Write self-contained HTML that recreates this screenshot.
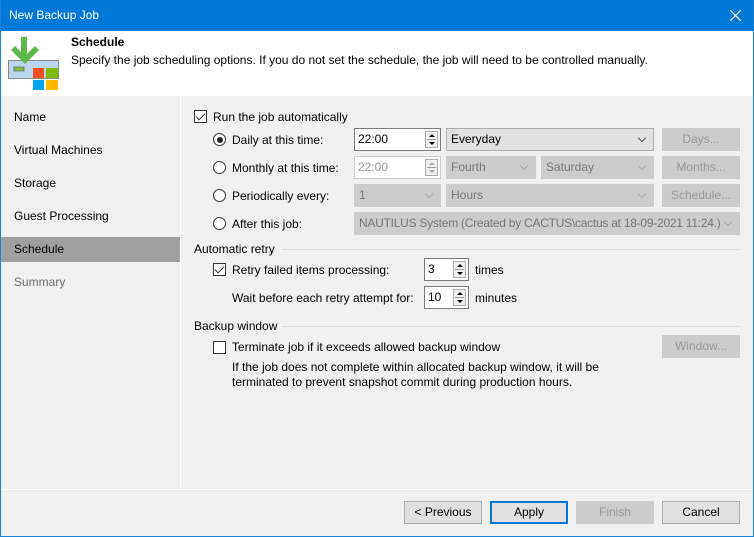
<!DOCTYPE html><html><head><style>
*{margin:0;padding:0;box-sizing:border-box}
body{width:754px;height:537px;overflow:hidden;font-family:"Liberation Sans",sans-serif;font-size:12px;color:#000;background:#f0f0f0;position:relative}
.a{position:absolute;white-space:nowrap}
.win{position:absolute;left:0;top:0;width:754px;height:537px;border:1px solid #1883d7;border-top:none}
.tb{position:absolute;left:0;top:0;width:754px;height:31px;background:#0078d7;color:#fff;font-size:12px}
.hdr{position:absolute;left:1px;top:31px;width:752px;height:65px;background:#fff}
.side{position:absolute;left:1px;top:96px;width:179px;height:392px;background:#f0f0f0}
.vsep{position:absolute;left:180px;top:96px;width:1px;height:392px;background:#fff}
.foot{position:absolute;left:1px;top:489px;width:752px;height:1px;background:#fff}
.cb{position:absolute;width:13px;height:13px;border:1px solid #333;background:#fff}
.cb.k::after{content:"";position:absolute;left:3px;top:0px;width:4px;height:8px;border:solid #333;border-width:0 1.5px 1.5px 0;transform:rotate(45deg)}
.rb{position:absolute;width:13px;height:13px;border:1px solid #333;border-radius:50%;background:#fff}
.rb.k::after{content:"";position:absolute;left:2.5px;top:2.5px;width:6px;height:6px;border-radius:50%;background:#222}
.box{position:absolute;height:23px;border:1px solid #7a7a7a;background:#fff;padding:3px 3px;line-height:15px;white-space:nowrap;overflow:hidden}
.box.d{border-color:#ccc;color:#999;background:#fff}
.sp{position:absolute;right:2px;top:2px;width:13px;height:17px;border:1px solid #adadad;background:#f0f0f0}
.sp::before{content:"";position:absolute;left:3px;top:2px;border:3px solid transparent;border-bottom:3px solid #000;border-top:0}
.sp::after{content:"";position:absolute;left:3px;bottom:2px;border:3px solid transparent;border-top:3px solid #000;border-bottom:0}
.sp i{position:absolute;left:1px;right:1px;top:7px;height:1px;background:#999}
.sp.d::before{border-bottom-color:#aaa}.sp.d::after{border-top-color:#aaa}
.dd{position:absolute;height:23px;border:1px solid #adadad;background:#e1e1e1;padding:3px 4px;line-height:15px;white-space:nowrap;overflow:hidden}
.dd.d{background:#ccc;border-color:#ccc;color:#777}
.dd::after{content:"";position:absolute;right:8px;top:6px;width:5px;height:5px;border:solid #555;border-width:0 1px 1px 0;transform:rotate(45deg)}
.dd.d::after{border-color:#aaa}
.btn{position:absolute;height:23px;border:1px solid #adadad;background:#e1e1e1;text-align:center;line-height:21px}
.btn.d{background:#ccc;border-color:#ccc;color:#999}
.sec{position:absolute;height:1px;background:#dcdcdc}
</style></head><body>
<div class="tb"><span class="a" style="left:9px;top:8px">New Backup Job</span>
<svg class="a" style="left:730px;top:10px" width="11" height="11"><path d="M0 0L11 11M11 0L0 11" stroke="#fff" stroke-width="1.2"/></svg></div>
<div class="win"></div>
<div class="hdr">
<svg class="a" style="left:0;top:0" width="64" height="64">
<rect x="7.5" y="29.5" width="50" height="18" fill="#bcd6ef" stroke="#888" stroke-width="1"/>
<rect x="13" y="36" width="10" height="4" fill="#7fc241" stroke="#555" stroke-width=".6"/>
<path d="M20 6h6v17l8-8 4 4-14 14-14-14 4-4 6 6z" fill="#5db94a"/>
<rect x="32" y="37" width="11" height="10" fill="#f25022"/><rect x="45" y="37" width="12" height="10" fill="#7fba00"/>
<rect x="32" y="49" width="11" height="10" fill="#00a4ef"/><rect x="45" y="49" width="12" height="10" fill="#ffb900"/>
</svg>
<span class="a" style="left:70px;top:4px;font-weight:bold">Schedule</span>
<span class="a" style="left:70px;top:22px">Specify the job scheduling options. If you do not set the schedule, the job will need to be controlled manually.</span>
</div>
<div class="side">
<span class="a" style="left:13px;top:14px">Name</span>
<span class="a" style="left:13px;top:47px">Virtual Machines</span>
<span class="a" style="left:13px;top:80px">Storage</span>
<span class="a" style="left:13px;top:113px">Guest Processing</span>
<div class="a" style="left:0;top:141px;width:179px;height:25px;background:#a0a0a0"></div>
<span class="a" style="left:13px;top:146px">Schedule</span>
<span class="a" style="left:13px;top:179px;color:#6d6d6d">Summary</span>
</div>
<div class="vsep"></div>
<div class="cb k" style="left:194px;top:110px"></div><span class="a" style="left:213px;top:110px">Run the job automatically</span>
<div class="rb k" style="left:213px;top:133px"></div><span class="a" style="left:232px;top:133px">Daily at this time:</span>
<div class="rb" style="left:213px;top:161px"></div><span class="a" style="left:232px;top:161px">Monthly at this time:</span>
<div class="rb" style="left:213px;top:189px"></div><span class="a" style="left:232px;top:189px">Periodically every:</span>
<div class="rb" style="left:213px;top:217px"></div><span class="a" style="left:232px;top:217px">After this job:</span>
<div class="box" style="left:354px;top:128px;width:87px">22:00<div class="sp"><i></i></div></div>
<div class="box d" style="left:354px;top:156px;width:87px">22:00<div class="sp d"><i></i></div></div>
<div class="dd" style="left:446px;top:128px;width:208px">Everyday</div>
<div class="dd d" style="left:446px;top:156px;width:90px">Fourth</div>
<div class="dd d" style="left:541px;top:156px;width:113px">Saturday</div>
<div class="dd d" style="left:354px;top:184px;width:87px">1</div>
<div class="dd d" style="left:446px;top:184px;width:208px">Hours</div>
<div class="dd d" style="left:354px;top:212px;width:386px;letter-spacing:-0.25px">NAUTILUS System (Created by CACTUS\cactus at 18-09-2021 11:24.)</div>
<div class="btn d" style="left:662px;top:128px;width:78px">Days...</div>
<div class="btn d" style="left:662px;top:156px;width:78px">Months...</div>
<div class="btn d" style="left:662px;top:184px;width:78px">Schedule...</div>
<span class="a" style="left:194px;top:242px">Automatic retry</span><div class="sec" style="left:282px;top:249px;width:458px"></div>
<div class="cb k" style="left:213px;top:263px"></div><span class="a" style="left:232px;top:263px">Retry failed items processing:</span>
<div class="box" style="left:424px;top:258px;width:45px">3<div class="sp"><i></i></div></div><span class="a" style="left:475px;top:263px">times</span>
<span class="a" style="left:232px;top:291px">Wait before each retry attempt for:</span>
<div class="box" style="left:424px;top:286px;width:45px">10<div class="sp"><i></i></div></div><span class="a" style="left:475px;top:291px">minutes</span>
<span class="a" style="left:194px;top:319px">Backup window</span><div class="sec" style="left:282px;top:326px;width:458px"></div>
<div class="cb" style="left:213px;top:341px"></div><span class="a" style="left:232px;top:340px">Terminate job if it exceeds allowed backup window</span>
<span class="a" style="left:232px;top:360px">If the job does not complete within allocated backup window, it will be</span>
<span class="a" style="left:232px;top:375px">terminated to prevent snapshot commit during production hours.</span>
<div class="btn d" style="left:662px;top:335px;width:78px">Window...</div>
<div class="foot"></div>
<div class="btn" style="left:404px;top:501px;width:78px">&lt; Previous</div>
<div class="btn" style="left:490px;top:501px;width:78px;border:2px solid #0078d7;line-height:19px">Apply</div>
<div class="btn d" style="left:576px;top:501px;width:78px">Finish</div>
<div class="btn" style="left:662px;top:501px;width:78px">Cancel</div>
</body></html>
